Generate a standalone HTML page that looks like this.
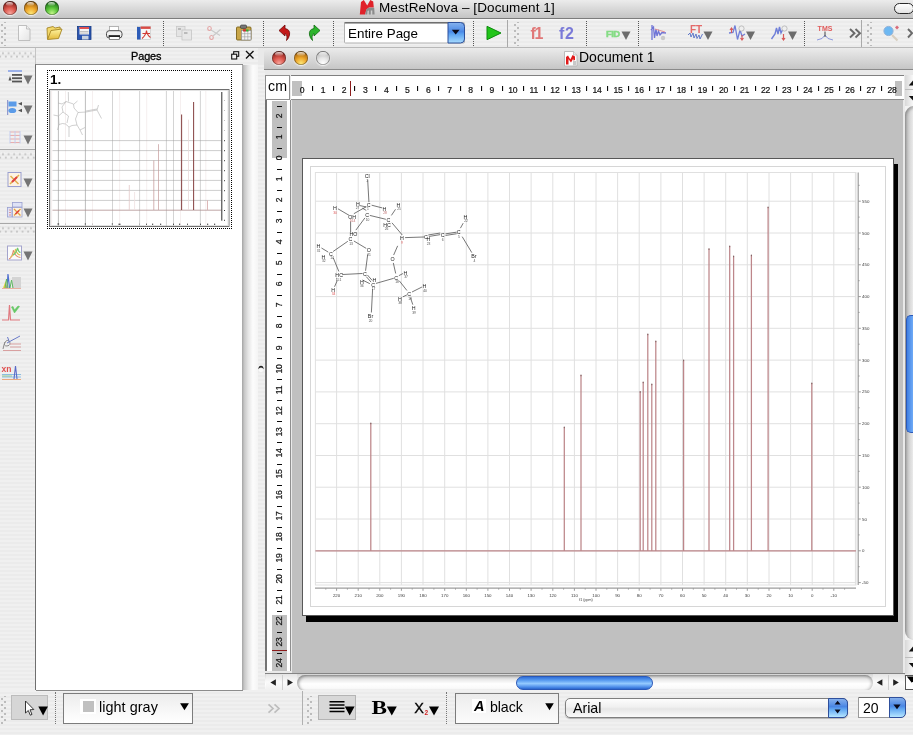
<!DOCTYPE html>
<html>
<head>
<meta charset="utf-8">
<title>MestReNova</title>
<style>
html,body{margin:0;padding:0;overflow:hidden;}
html{width:913px;height:735px;}
body{width:913px;height:735px;overflow:hidden;position:relative;background:#e9e9e9;font-family:"Liberation Sans",sans-serif;color:#000;}
.abs,body>div,body>svg{position:absolute;}
.stripes{background:repeating-linear-gradient(to bottom,#f0f0f0 0,#f0f0f0 2px,#ebebeb 2px,#ebebeb 4px);}
#titlebar{left:0;top:0;width:913px;height:18px;background:linear-gradient(#ececec,#e0e0e0 30%,#c4c4c4);border-bottom:1px solid #7c7c7c;}
.tl{position:absolute;border-radius:50%;box-shadow:0 0 0 0.8px rgba(30,30,30,.45) inset,0 1px 1.5px rgba(255,255,255,.85);}
.tl:after{content:"";position:absolute;left:24%;top:8%;width:52%;height:30%;border-radius:50%;background:linear-gradient(rgba(255,255,255,.8),rgba(255,255,255,.05));}
#title{left:379px;top:-1px;font-size:13.5px;line-height:18px;white-space:nowrap;letter-spacing:0.1px;}
#pill{left:893.5px;top:3px;width:19.5px;height:10.5px;border:1.5px solid #2a2a2a;border-radius:6px;background:linear-gradient(#fff,#e4e4e4);box-sizing:border-box;}
#toolbar{left:0;top:19px;width:913px;height:28px;border-bottom:1px solid #b9b9b9;}
.grip{position:absolute;width:7px;background-image:radial-gradient(circle,#bcbcbc 0.8px,transparent 1.3px),radial-gradient(circle,#bcbcbc 0.8px,transparent 1.3px);background-size:6px 6px;background-position:-1px 0,2px 3px;}
.vsep{position:absolute;width:0;border-left:1px dotted #555;}
#lefttb{left:0;top:48px;width:35px;height:642px;}
#pageshdr{left:36px;top:48px;width:222px;height:17px;font-size:10.9px;text-align:center;line-height:16px;-webkit-text-stroke:0.3px #000;text-indent:-1.5px;letter-spacing:-0.1px}
#pagespanel{left:35px;top:64px;width:207px;height:626px;background:#fff;border-left:1.5px solid #6f6f6f;border-top:1px solid #8d8d8d;}
#split{left:242px;top:65px;width:16px;height:625px;background:linear-gradient(to right,#a4a4a4 0,#c8c8c8 15%,#e6e6e6 40%,#fcfcfc 68%,#f4f4f4 100%);}
#docbar{left:264px;top:48px;width:649px;height:21px;background:linear-gradient(#ebebeb,#dcdcdc 40%,#c6c6c6);border-bottom:1px solid #8a8a8a;border-top-left-radius:5px;}
#doctitle{left:579px;top:48px;font-size:14px;line-height:19px;white-space:nowrap;}
#cmbox{left:265px;top:75px;width:23px;height:23px;background:#fff;border:1px solid #8f8f8f;font-size:14.2px;line-height:21px;text-align:center;}
#hruler{left:291px;top:75px;width:613px;height:23px;background:#fff;border-top:1.5px solid #7f7f7f;border-bottom:1px solid #8f8f8f;box-sizing:content-box;}
#vruler{left:265px;top:100px;width:23px;height:571px;background:#fff;border-left:2px solid #747474;border-right:1px solid #8f8f8f;}
.rl{position:absolute;width:20px;text-align:center;font-size:8.6px;line-height:10px;color:#111;-webkit-text-stroke:0.2px #111;letter-spacing:-0.2px;}
.rt{position:absolute;width:1px;height:5px;background:#0a0a0a;box-shadow:0.3px 0 0 rgba(0,0,0,.35);}
.rlv{position:absolute;width:20px;height:10px;text-align:center;font-size:8.6px;line-height:10px;color:#111;-webkit-text-stroke:0.2px #111;letter-spacing:-0.2px;transform:rotate(-90deg);transform-origin:50% 50%;}
.rtv{position:absolute;width:5px;height:1px;background:#0a0a0a;}
#canvas{left:292px;top:100px;width:611px;height:573px;background:#c0c0c0;overflow:hidden;}
#page{left:302px;top:158px;width:590px;height:455.5px;background:#fff;border:1px solid #585858;box-shadow:4px 6px 0 0 #000;box-sizing:content-box;}
#inner{left:310px;top:166px;width:574px;height:439px;border:1px solid #d6d6d6;box-sizing:content-box;}
svg .gr{stroke:#e0e0e0;stroke-width:1;}
svg .ax{font-family:"Liberation Sans",sans-serif;font-size:4.4px;fill:#3a3a3a;}
#hscroll{left:265px;top:673px;width:640px;height:17px;background:linear-gradient(#d4d4d4,#f4f4f4 35%,#ffffff 60%,#ededed);border-top:1px solid #848484;}
#vscroll{left:905px;top:75px;width:8px;height:598px;background:#f2f2f2;overflow:hidden;}
#bottombar{left:0;top:690px;width:913px;height:45px;}
.combo{position:absolute;box-sizing:border-box;border:1px solid #8a8a8a;background:#fff;font-size:14px;}
.tri{position:absolute;width:0;height:0;border-left:5px solid transparent;border-right:5px solid transparent;border-top:9px solid #111;}
.trig{position:absolute;width:0;height:0;border-left:6px solid transparent;border-right:6px solid transparent;border-top:10px solid #7a7a7a;}
.hgrip{position:absolute;width:35px;height:7px;background-image:radial-gradient(circle,#c2c2c2 0.8px,transparent 1.3px),radial-gradient(circle,#c2c2c2 0.8px,transparent 1.3px);background-size:5.6px 7px;background-position:0.2px -1.3px,-2.6px 2.2px;}

body>div,body>svg{will-change:transform;}

</style>
</head>
<body>
<div id="titlebar"></div>
<div class="tl" style="left:3.25px;top:1.25px;width:13.5px;height:13.5px;background:radial-gradient(circle at 50% 88%,#f6a59c 0,#de5a50 38%,#a0302a 68%,#3a0c0a 100%);"></div><div class="tl" style="left:24.25px;top:1.25px;width:13.5px;height:13.5px;background:radial-gradient(circle at 50% 88%,#fbe678 0,#eea82c 38%,#b87414 68%,#3a2406 100%);"></div><div class="tl" style="left:45.25px;top:1.25px;width:13.5px;height:13.5px;background:radial-gradient(circle at 50% 88%,#c2f48a 0,#5cc63a 38%,#2e8a22 68%,#0c2e08 100%);"></div>
<svg style="left:359px;top:0px" width="17" height="16" viewBox="359 0 17 16"><path d="M359.8 14.5 L361 2 L363.8 0 L367.2 5.5 L370.3 0 L373.2 1.5 L373.8 7.5 L369 7.5 L366.5 9.5 L365 14.5 Z" fill="#e0222a"/><path d="M365.2 14.5 L366.2 9.5 L368.5 7.8 L374.2 7.8 L374.6 14.5 L372.3 14.5 L372.3 10.5 L370.8 10.5 L370.8 14.5 L368.8 14.5 L368.8 10.5 L367.6 11 L367.3 14.5 Z" fill="#8c8c8c"/></svg>
<div id="title">MestReNova – [Document 1]</div>
<div id="pill"></div>
<div id="toolbar" class="stripes"></div>
<div style="left:0;top:19px;width:913px;height:1px;background:#f8f8f8"></div>
<div class="grip" style="left:0px;top:22px;height:24px;"></div>
<div class="vsep" style="left:163px;top:21px;height:25px;"></div>
<div class="vsep" style="left:263px;top:21px;height:25px;"></div>
<div class="vsep" style="left:333px;top:21px;height:25px;"></div>
<div class="vsep" style="left:473px;top:21px;height:25px;"></div>
<div style="left:507px;top:20px;width:1px;height:27px;background:#a9a9a9"></div>
<div class="grip" style="left:513px;top:22px;height:24px;"></div>
<div class="vsep" style="left:586px;top:21px;height:25px;"></div>
<div class="vsep" style="left:638px;top:21px;height:25px;"></div>
<div class="vsep" style="left:804px;top:21px;height:25px;"></div>
<div style="left:861px;top:20px;width:1px;height:27px;background:#a9a9a9"></div>
<div class="grip" style="left:866px;top:22px;height:24px;"></div>
<svg style="left:0;top:19px" width="913" height="29" viewBox="0 19 913 29">
<defs>
<linearGradient id="gpap" x1="0" y1="0" x2="1" y2="1"><stop offset="0" stop-color="#ffffff"/><stop offset="1" stop-color="#e4e4e4"/></linearGradient>
<linearGradient id="gfold" x1="0" y1="0" x2="0" y2="1"><stop offset="0" stop-color="#fff4a0"/><stop offset="1" stop-color="#e3b93a"/></linearGradient>
<linearGradient id="gblue" x1="0" y1="0" x2="0" y2="1"><stop offset="0" stop-color="#86b2ee"/><stop offset="0.45" stop-color="#4a88e6"/><stop offset="0.55" stop-color="#5aa0f0"/><stop offset="1" stop-color="#a8dcff"/></linearGradient>
</defs>
<!-- new -->
<path d="M18.5 25.5 L26.5 25.5 L30 29 L30 40.5 L18.5 40.5 Z" fill="url(#gpap)" stroke="#b9b9b9" stroke-width="0.9"/>
<path d="M26.5 25.5 L26.5 29 L30 29" fill="#eee" stroke="#b0b0b0" stroke-width="0.7"/>
<!-- open folder -->
<path d="M47.5 39 L47 28 L53 26.5 L55 28 L60 27 L60.5 30" fill="#f3d86a" stroke="#9a7a18" stroke-width="0.8"/>
<path d="M47.5 39.5 L51 30.5 L62 29 L58.5 38.5 Z" fill="url(#gfold)" stroke="#a58422" stroke-width="0.9"/>
<!-- save -->
<rect x="77.5" y="26.5" width="13.5" height="13" fill="#2a55b0" stroke="#173b86" stroke-width="0.8"/>
<rect x="79.5" y="27" width="9.5" height="7.5" fill="#f4f4f4"/>
<rect x="79.5" y="27" width="9.5" height="2" fill="#e05050"/>
<rect x="80" y="31" width="8.5" height="0.7" fill="#aaa"/><rect x="80" y="32.7" width="8.5" height="0.7" fill="#aaa"/>
<rect x="82" y="35.8" width="6.5" height="3.7" fill="#c8d2e0"/>
<!-- printer -->
<rect x="109.5" y="26.5" width="9" height="5.5" fill="#fff" stroke="#a4a4a4" stroke-width="0.8"/>
<rect x="106.5" y="30.7" width="15.5" height="7.3" rx="2.8" fill="#f1f1f1" stroke="#4a4a4a" stroke-width="1"/>
<rect x="109.3" y="35.6" width="10" height="4" fill="#fff" stroke="#555" stroke-width="0.7"/>
<rect x="108.6" y="35.3" width="11.4" height="1.7" fill="#222"/>
<!-- pdf -->
<rect x="137.5" y="26.5" width="13" height="13" fill="#f7f7f7" stroke="#c9c9c9" stroke-width="0.7"/>
<rect x="137" y="27" width="3.6" height="12.5" fill="#2d5cb8"/>
<rect x="140.6" y="26.5" width="10" height="2.4" fill="#d84a44"/>
<path d="M142 38.5 Q146 35 146.5 30.5 Q147 35 150.5 37.5 M142.5 33.5 L150 33.5" fill="none" stroke="#d23a34" stroke-width="1.1"/>
<!-- copy (disabled) -->
<g opacity="0.75"><rect x="176.5" y="26.5" width="8.5" height="10" fill="#e2e2e2" stroke="#bcbcbc" stroke-width="0.8"/>
<rect x="182" y="30" width="9.5" height="10" fill="#e6e6e6" stroke="#b8b8b8" stroke-width="0.8"/>
<rect x="178" y="28" width="3" height="2" fill="#aaa"/><rect x="184" y="32" width="3.5" height="2" fill="#aaa"/></g>
<!-- cut (disabled) -->
<g fill="none" stroke="#e3a3a3" stroke-width="1.1"><ellipse cx="209.5" cy="28.5" rx="1.8" ry="2"/><ellipse cx="211.5" cy="37.5" rx="1.8" ry="2"/></g>
<path d="M211 30 L220 35.5 M213 36 L220.5 29.5" stroke="#c9c9c9" stroke-width="1.1" fill="none"/>
<!-- paste -->
<rect x="236.5" y="27" width="14.5" height="13" rx="1" fill="#c9a648" stroke="#7c621a" stroke-width="0.9"/>
<rect x="240.5" y="25" width="6" height="3.4" rx="1" fill="#777" stroke="#333" stroke-width="0.6"/>
<rect x="241.5" y="30.5" width="9.5" height="9.5" fill="#f4f4f4" stroke="#8a8a8a" stroke-width="0.7"/>
<path d="M241.5 33.7 H251 M241.5 36.8 H251 M244.7 30.5 V40 M247.8 30.5 V40" stroke="#9a9a9a" stroke-width="0.6"/>
<rect x="243" y="29.2" width="3" height="2.3" fill="#c33"/><rect x="246" y="29.5" width="2.5" height="2" fill="#3a3"/>
<!-- undo -->
<path d="M279 30.5 L285 25 L285 28.5 Q290.5 29.5 289.5 35 Q289 38 286.5 40.5 Q288 35 285 33.5 L285 36 Z" fill="#c41818" stroke="#6e0808" stroke-width="0.8" stroke-linejoin="round"/>
<!-- redo -->
<path d="M320 30.5 L314 25 L314 28.5 Q308.5 29.5 309.5 35 Q310 38 312.5 40.5 Q311 35 314 33.5 L314 36 Z" fill="#2cb52c" stroke="#0d6a0d" stroke-width="0.8" stroke-linejoin="round"/>
<!-- combo entire page -->
<rect x="344.5" y="22.5" width="120" height="20.5" rx="1" fill="#fff" stroke="#b0b0b0" stroke-width="1"/>
<path d="M344.5 22.8 H448" stroke="#5a5a5a" stroke-width="1.3"/>
<path d="M448 22.5 H460.5 Q464.5 22.5 464.5 26.5 V39 Q464.5 43 460.5 43 H448 Z" fill="url(#gblue)" stroke="#2c4f9a" stroke-width="1"/>
<path d="M451.8 29.8 L459.6 29.8 L455.7 34.4 Z" fill="#0a0a1a"/>
<text x="348" y="38.3" font-family="Liberation Sans, sans-serif" font-size="13.4" fill="#000">Entire Page</text>
<!-- play -->
<path d="M487 26.3 L487 39.7 L501 33 Z" fill="#22c51a" stroke="#0c8a0c" stroke-width="1" stroke-linejoin="round"/>
<!-- f1 f2 -->
<text x="530.5" y="39" font-family="Liberation Sans, sans-serif" font-weight="bold" font-size="16" fill="#e07878" textLength="13">f1</text>
<text x="559" y="39" font-family="Liberation Sans, sans-serif" font-weight="bold" font-size="16" fill="#7a7ad8" textLength="15">f2</text>
<!-- FID -->
<text x="606" y="37" font-family="Liberation Sans, sans-serif" font-weight="bold" font-size="9.5" fill="#86dc86" stroke="#86dc86" stroke-width="0.5" textLength="14">FID</text>
<path d="M621.5 31.5 L630.5 31.5 L626 40 Z" fill="#6c6c6c"/>
<!-- fid plot -->
<path d="M652 25 L652 40 M651 30 L653.5 27 L654.5 38 L656 29 L657 36 L658.5 31 L660 35 L662 32.5 L666 33" fill="none" stroke="#6f74d6" stroke-width="1.3"/>
<path d="M655 29 L665 32" stroke="#e28a8a" stroke-width="0.9"/>
<circle cx="663" cy="38" r="2.2" fill="#c9c9c9"/>
<!-- FT -->
<text x="690" y="33" font-family="Liberation Sans, sans-serif" font-weight="bold" font-size="10" fill="#e46a6a" textLength="12">FT</text>
<path d="M688 35 L690 33 L691 37 L693 33 L694 38 L696 34 L697 38.5 L699 35 L700 39 L702.5 34" fill="none" stroke="#5f78c8" stroke-width="1"/>
<path d="M703.5 31.5 L712.5 31.5 L708 40 Z" fill="#6c6c6c"/>
<!-- phase -->
<path d="M729 33 L733 32.5 L735 25.5 L737.5 39.5 L740 30 L742 36 L745 34" fill="none" stroke="#6f7fd8" stroke-width="1.3"/>
<circle cx="741.5" cy="28.5" r="2.6" fill="#efefef" stroke="#aaa" stroke-width="0.7"/>
<path d="M731.5 28 V33 M730 30 L731.5 28 L733 30 M742 35 V40 M740.5 38 L742 40 L743.5 38" stroke="#d85a5a" stroke-width="1.1" fill="none"/>
<path d="M746 31.5 L755 31.5 L750.5 40 Z" fill="#6c6c6c"/>
<!-- baseline -->
<path d="M771.5 39 L775 34 L776.5 28 L778 34 L779.5 27 L781 33 L783 29 L786 28" fill="none" stroke="#6f7fd8" stroke-width="1.4"/>
<circle cx="784.5" cy="28.5" r="2.6" fill="#efefef" stroke="#aaa" stroke-width="0.7"/>
<path d="M783.5 34 V40 M782 38 L783.5 40 L785 38" stroke="#d85a5a" stroke-width="1.2" fill="none"/>
<path d="M788 31.5 L797 31.5 L792.5 40 Z" fill="#6c6c6c"/>
<!-- TMS -->
<text x="817.5" y="31" font-family="Liberation Sans, sans-serif" font-weight="bold" font-size="7" fill="#e05a5a" textLength="15">TMS</text>
<path d="M817 40 Q823 39.5 825 35 Q827 39.5 833 40" fill="none" stroke="#8a96de" stroke-width="1"/>
<path d="M825 31.5 V37" stroke="#444" stroke-width="1"/>
<!-- >> -->
<path d="M850 29 L854.5 33.2 L850 37.5 M855.5 29 L860 33.2 L855.5 37.5" fill="none" stroke="#6a6a6a" stroke-width="1.9"/>
<!-- zoom -->
<circle cx="888.5" cy="31" r="4.6" fill="#6db8f2" stroke="#8fb0d8" stroke-width="1"/>
<path d="M892 35 L897.5 40.5" stroke="#d8cfc0" stroke-width="2.2"/>
<path d="M895 27.5 L897 25.5 L899 27.5 L897 29.5 Z" fill="#d86a7a"/>
<path d="M908 29 L912 33.2 L908 37.5" fill="none" stroke="#6a6a6a" stroke-width="1.9"/>
</svg>
<div id="lefttb" class="stripes"></div>
<div style="left:34.5px;top:48px;width:1px;height:17px;background:#c4c4c4"></div>
<div class="hgrip" style="left:0px;top:51px;"></div>
<div class="hgrip" style="left:0px;top:152px;"></div>
<div style="left:0;top:148.5px;width:35px;height:1px;background:#a8a8a8"></div>
<div class="hgrip" style="left:0px;top:226px;"></div>
<div style="left:0;top:222.5px;width:35px;height:1px;background:#a8a8a8"></div>
<svg style="left:0;top:48px" width="36" height="642" viewBox="0 48 36 642">
<!-- 1 indent -->
<rect x="8" y="70" width="14" height="2" fill="#9bb0e8"/>
<rect x="12" y="74" width="10" height="1.8" fill="#555"/><rect x="12" y="77.3" width="10" height="1.8" fill="#555"/><rect x="12" y="80.6" width="10" height="1.8" fill="#555"/>
<path d="M8.5 80.5 L10 76 L11.5 80.5 Z" fill="#555"/>
<path d="M23.5 75.5 L32.5 75.5 L28 84.5 Z" fill="#747474"/>
<!-- 2 shapes -->
<rect x="7.2" y="100" width="1" height="15" fill="#7a86c8"/>
<rect x="8.5" y="101.5" width="8" height="5" fill="#5b9be8"/>
<ellipse cx="12.3" cy="110.5" rx="3.9" ry="2.6" fill="#5b9be8"/>
<path d="M18 103.7 L22 102 L22 105.4 Z M18 110.5 L22 108.8 L22 112.2 Z" fill="#555"/>
<path d="M23.5 105.5 L32.5 105.5 L28 114.5 Z" fill="#747474"/>
<!-- 3 table -->
<g opacity="0.8"><path d="M10 132 H20 M10 135.5 H20 M10 139 H20 M10 142.5 H20" stroke="#e8a0a0" stroke-width="1"/>
<path d="M10 131 V143.5 M15 131 V143.5 M20 131 V143.5" stroke="#b8c4ee" stroke-width="1"/></g>
<path d="M23.5 135.5 L32.5 135.5 L28 144.5 Z" fill="#747474"/>
<!-- 4 -->
<rect x="8" y="172.5" width="13" height="14" fill="#fdf3e3" stroke="#9aa0d0" stroke-width="1"/>
<path d="M10 184 L19 175 M10.5 176 L18.5 184" stroke="#e0b050" stroke-width="1.5"/>
<path d="M12 182 L17 177" stroke="#e04040" stroke-width="2"/>
<path d="M23.5 178.5 L32.5 178.5 L28 187.5 Z" fill="#747474"/>
<!-- 5 -->
<rect x="12.5" y="202.5" width="9.5" height="4.5" fill="#dfe3f6" stroke="#9aa0d0" stroke-width="0.8"/>
<rect x="7.5" y="207.5" width="4.5" height="9.5" fill="#dfe3f6" stroke="#9aa0d0" stroke-width="0.8"/>
<rect x="12.5" y="207.5" width="9.5" height="9.5" fill="#fdf3e3" stroke="#9aa0d0" stroke-width="0.8"/>
<path d="M14 215.5 L20.5 209 M14 209 L20.5 215.5" stroke="#e0a040" stroke-width="1.3"/>
<path d="M15.5 214 L19 210.5" stroke="#e04040" stroke-width="1.6"/>
<path d="M9 210 H11 M9 212.5 H11 M9 215 H11" stroke="#e08080" stroke-width="0.8"/>
<path d="M23.5 208.5 L32.5 208.5 L28 217.5 Z" fill="#747474"/>
<!-- 6 -->
<rect x="7.5" y="246" width="14" height="14" fill="#fbfbfb" stroke="#a4a4cc" stroke-width="1"/>
<path d="M9 259 Q12 258 13.5 250 Q15 257 20.5 257.5" fill="none" stroke="#e08a6a" stroke-width="1.1"/>
<path d="M10.5 257 Q14 256 15.5 249 Q17 255 20.5 255" fill="none" stroke="#e0c050" stroke-width="1.1"/>
<path d="M13 255 Q16 254 17.5 248 Q18.5 252 20.5 252.5" fill="none" stroke="#70c870" stroke-width="1.1"/>
<path d="M23.5 251.5 L32.5 251.5 L28 260.5 Z" fill="#747474"/>
<!-- 7 -->
<rect x="12" y="277" width="9" height="11" fill="#d4d4d4"/>
<path d="M2 288.5 H21" stroke="#e8b0a0" stroke-width="1"/>
<path d="M3 288 L5.5 281 L7.5 288 Z" fill="#e8d040"/>
<path d="M7 288 L8 274 L9.5 288" fill="none" stroke="#5070d0" stroke-width="1.2"/>
<path d="M5 288 L6.5 279 L8 288 M10 288 L11.5 280 L13 288" fill="none" stroke="#60b860" stroke-width="1"/>
<!-- 8 -->
<path d="M2 320 H8.5 L9.5 305 L10.5 320 H20" fill="none" stroke="#e07a80" stroke-width="1.2"/>
<path d="M11.5 307 L14.5 313 L19.5 306.5 L18 306 L14.5 310 L13 306.5 Z" fill="#66c866" stroke="#66c866" stroke-width="0.6"/>
<!-- 9 -->
<path d="M3 349 Q5 338 9 341 Q12 345 7 346 Q3 346 5 342" fill="none" stroke="#8a8a8a" stroke-width="1"/>
<path d="M3 350.5 H21 M10 347 H21 M10 344 H21" stroke="#d8a0a0" stroke-width="1"/>
<path d="M7 343 L20 336 M7.5 337 L9 341" stroke="#6a7ac8" stroke-width="1"/>
<!-- 10 -->
<text x="1.5" y="372" font-family="Liberation Sans, sans-serif" font-weight="bold" font-size="8.5" fill="#e05050">xn</text>
<path d="M2 374.5 H21 M2 377 H21" stroke="#80b8e0" stroke-width="0.9"/>
<path d="M2 379.5 H21" stroke="#e8a070" stroke-width="0.9"/>
<path d="M14 379 L15.5 366 L17 379" fill="none" stroke="#5a6ac8" stroke-width="1.1"/>
<path d="M2 376 H12" stroke="#80c080" stroke-width="0.8"/>
</svg>
<div id="pageshdr" class="stripes">Pages</div>
<svg style="left:230px;top:49px" width="28" height="14" viewBox="230 49 28 14">
<rect x="233.7" y="51.7" width="5" height="4.6" fill="#f4f4f4" stroke="#111" stroke-width="1.1"/>
<rect x="231.7" y="54.2" width="5" height="4.8" fill="#f4f4f4" stroke="#111" stroke-width="1.1"/>
<path d="M246 51 L253.5 58.5 M253.5 51 L246 58.5" stroke="#111" stroke-width="1.4"/>
</svg>
<div id="pagespanel"></div>
<div id="split"></div>
<div class="stripes" style="left:258px;top:65px;width:7px;height:625px;"></div>
<div style="left:258px;top:364px;width:6px;height:10px;margin-top:-4px"><svg width="6" height="10" viewBox="0 0 6 10"><path d="M0.3 5.2 Q0.6 1.8 3 1.8 Q5.4 1.8 5.7 5.2 Q4.6 3.6 3 3.6 Q1.4 3.6 0.3 5.2 Z" fill="#222"/><circle cx="3" cy="6.2" r="2" fill="#fafafa"/></svg></div>
<div style="left:47px;top:70px;width:182.5px;height:157px;border:1px dotted #000;box-sizing:content-box;"></div>
<div style="left:50px;top:72px;font-size:13.5px;font-weight:bold;line-height:15px;">1.</div>
<svg style="left:36px;top:65px" width="207" height="170" viewBox="36 65 207 170">
<rect x="49.5" y="89.5" width="179.5" height="137" fill="#fff" stroke="#6e6e6e" stroke-width="1"/>
<rect x="50.5" y="90.5" width="177.5" height="135" fill="none" stroke="#e2e2e2" stroke-width="1"/>
<g stroke="#8e8e8e" stroke-width="0.6">
<path d="M58.4 91 V226 M85.4 91 V226"/>
</g>
<g stroke="#b0b0b0" stroke-width="0.55">
<path d="M112.5 91 V226 M139.6 91 V226 M166.4 91 V226 M173.5 91 V226 M200.4 91 V226"/>
</g>
<g stroke="#eadede" stroke-width="0.5">
<path d="M51.6 91 V226 M146.7 91 V226 M205.8 91 V226 M119.6 91 V226 M92.5 91 V226 M65.5 91 V226 M180.5 91 V226"/>
</g>
<g stroke="#9c9c9c" stroke-width="0.5">
<path d="M52.5 140.6 H221.5 M52.5 150.6 H221.5 M52.5 160.5 H221.5 M52.5 170.4 H221.5 M52.5 180.4 H221.5 M52.5 190.4 H221.5 M52.5 200.4 H221.5"/>
</g>
<path d="M52.5 210.2 H221.5" stroke="#b09090" stroke-width="0.8"/>
<!-- peaks -->
<path d="M129.3 210 V185" stroke="#e2c8c8" stroke-width="0.8"/>
<path d="M134.6 210 V192" stroke="#eedede" stroke-width="0.8"/>
<path d="M153.8 210 V160.5" stroke="#c09090" stroke-width="0.7"/>
<path d="M158.5 210 V144.2" stroke="#c49a9a" stroke-width="0.7"/>
<path d="M181.6 210 V114.6" stroke="#8a4848" stroke-width="1.05"/>
<path d="M188.5 210 V119.7" stroke="#ead8d8" stroke-width="0.8"/>
<path d="M193.6 210 V101.9" stroke="#8a4848" stroke-width="1.05"/>
<path d="M207.5 210 V200.3" stroke="#d8b0b0" stroke-width="0.9"/>
<path d="M221.8 92 V220.7" stroke="#2e2e2e" stroke-width="1"/>
<g fill="#333">
<rect x="224" y="140.2" width="1" height="1"/><rect x="224" y="150.2" width="1" height="1"/><rect x="224" y="160.2" width="1" height="1"/><rect x="224" y="170.2" width="1" height="1"/><rect x="224" y="180.2" width="1" height="1"/><rect x="224" y="190.2" width="1" height="1"/><rect x="224" y="200.2" width="1" height="1"/><rect x="224" y="210" width="1" height="1"/><rect x="224" y="219.8" width="1" height="1"/>
<rect x="224" y="100" width="0.8" height="0.8" opacity=".5"/><rect x="224" y="110" width="0.8" height="0.8" opacity=".5"/><rect x="224" y="120" width="0.8" height="0.8" opacity=".5"/><rect x="224" y="130" width="0.8" height="0.8" opacity=".5"/>
</g>
<g fill="#222">
<rect x="57.5" y="223.5" width="1.6" height="1"/><rect x="84.8" y="223.5" width="1" height="1"/><rect x="111.8" y="223.5" width="1" height="1"/><rect x="118.5" y="223.7" width="2" height="1"/><rect x="146" y="223.7" width="1" height="1"/><rect x="152" y="223.7" width="1.2" height="1"/><rect x="160" y="223.7" width="1.2" height="1"/><rect x="173" y="223.7" width="1" height="1"/><rect x="179" y="223.7" width="1.2" height="1"/><rect x="187" y="223.7" width="1" height="1"/><rect x="200" y="223.7" width="1" height="1"/><rect x="207" y="223.7" width="1.2" height="1"/><rect x="214" y="223.7" width="1.2" height="1"/><rect x="92" y="223.7" width="0.8" height="0.8" opacity=".5"/><rect x="65" y="223.7" width="0.8" height="0.8" opacity=".5"/><rect x="139" y="223.7" width="0.8" height="0.8" opacity=".5"/>
</g>
<!-- mini molecule -->
<g fill="none" stroke="#b0b0b0" stroke-width="0.6">
<path d="M62 104 L66 101.5 L69 102.5 L73.5 104 L74 108 L78 112.5 L75.5 119 L77 125 L72 125.5 L69 127 L65.5 124 L62.5 123.5 L59 124.5 L58.5 116 L63 112 L62 107 L66 101.5"/>
<path d="M63 112 L68.5 116 L67 123 M68.3 92 L68.5 101.5 M78 112.5 L86 112 L97 110 L101.5 118.5 M97 110 L98.5 105 M86 111 L97 109 M69 127 L69 137 M77 125 L80 130 L85 127.5 M80 130 L82.5 135 M58.5 116 L53.5 115 M59 124.5 L57.5 130 M74 104 L77.5 101 M62 104 L58 103"/>
</g>
</svg>

<div id="docbar"></div>
<div class="tl" style="left:272.0px;top:51.0px;width:14.0px;height:14.0px;background:radial-gradient(circle at 50% 88%,#f6a59c 0,#de5a50 38%,#a0302a 68%,#3a0c0a 100%);"></div><div class="tl" style="left:294.0px;top:51.0px;width:14.0px;height:14.0px;background:radial-gradient(circle at 50% 88%,#fbe678 0,#eea82c 38%,#b87414 68%,#3a2406 100%);"></div><div class="tl" style="left:316.3px;top:51.0px;width:14.0px;height:14.0px;background:radial-gradient(circle at 50% 88%,#ffffff 0,#e6e6e6 38%,#c4c4c4 68%,#8a8a8a 100%);"></div>
<svg style="left:564px;top:50px" width="14" height="17" viewBox="0 0 14 17"><path d="M0.5 1.5 H9.5 L13 5 V16 H0.5 Z" fill="#fdfdfd" stroke="#b4b4b4" stroke-width="0.9"/><path d="M9.5 1.5 V5 H13" fill="#e8e8e8" stroke="#b4b4b4" stroke-width="0.7"/><path d="M2 14.5 V7 L4 5.5 L6.3 9.5 L8.6 5 L11 6.5 V10 L9.3 10.5 L9.3 8.5 L7 12.5 L4.5 9 V14.5 Z" fill="#e01a1a"/><rect x="9" y="11" width="3" height="4.5" fill="#c8c8c8"/></svg>
<div id="doctitle">Document 1</div>
<div id="cmbox">cm</div>
<div id="hruler"></div>
<div id="vruler"></div>
<div style="left:292px;top:81px;width:10px;height:15px;background:#c0c0c0"></div>
<div style="left:895px;top:81px;width:7px;height:15px;background:#c0c0c0"></div>
<div style="left:272px;top:101px;width:15px;height:57px;background:#c0c0c0"></div>
<div style="left:272px;top:615px;width:15px;height:56px;background:#c0c0c0"></div>
<div style="left:0;top:0;width:913px;height:735px;"><div class="rl" style="left:292.0px;top:84.5px;">0</div><div class="rt" style="left:312px;top:86px;"></div><div class="rl" style="left:313.1px;top:84.5px;">1</div><div class="rt" style="left:333px;top:86px;"></div><div class="rl" style="left:334.1px;top:84.5px;">2</div><div class="rt" style="left:354px;top:86px;"></div><div class="rl" style="left:355.2px;top:84.5px;">3</div><div class="rt" style="left:375px;top:86px;"></div><div class="rl" style="left:376.3px;top:84.5px;">4</div><div class="rt" style="left:396px;top:86px;"></div><div class="rl" style="left:397.4px;top:84.5px;">5</div><div class="rt" style="left:417px;top:86px;"></div><div class="rl" style="left:418.4px;top:84.5px;">6</div><div class="rt" style="left:438px;top:86px;"></div><div class="rl" style="left:439.5px;top:84.5px;">7</div><div class="rt" style="left:460px;top:86px;"></div><div class="rl" style="left:460.6px;top:84.5px;">8</div><div class="rt" style="left:481px;top:86px;"></div><div class="rl" style="left:481.7px;top:84.5px;">9</div><div class="rt" style="left:502px;top:86px;"></div><div class="rl" style="left:502.8px;top:84.5px;">10</div><div class="rt" style="left:523px;top:86px;"></div><div class="rl" style="left:523.8px;top:84.5px;">11</div><div class="rt" style="left:544px;top:86px;"></div><div class="rl" style="left:544.9px;top:84.5px;">12</div><div class="rt" style="left:565px;top:86px;"></div><div class="rl" style="left:566.0px;top:84.5px;">13</div><div class="rt" style="left:586px;top:86px;"></div><div class="rl" style="left:587.0px;top:84.5px;">14</div><div class="rt" style="left:607px;top:86px;"></div><div class="rl" style="left:608.1px;top:84.5px;">15</div><div class="rt" style="left:628px;top:86px;"></div><div class="rl" style="left:629.2px;top:84.5px;">16</div><div class="rt" style="left:649px;top:86px;"></div><div class="rl" style="left:650.3px;top:84.5px;">17</div><div class="rt" style="left:670px;top:86px;"></div><div class="rl" style="left:671.3px;top:84.5px;">18</div><div class="rt" style="left:691px;top:86px;"></div><div class="rl" style="left:692.4px;top:84.5px;">19</div><div class="rt" style="left:712px;top:86px;"></div><div class="rl" style="left:713.5px;top:84.5px;">20</div><div class="rt" style="left:734px;top:86px;"></div><div class="rl" style="left:734.6px;top:84.5px;">21</div><div class="rt" style="left:755px;top:86px;"></div><div class="rl" style="left:755.6px;top:84.5px;">22</div><div class="rt" style="left:776px;top:86px;"></div><div class="rl" style="left:776.7px;top:84.5px;">23</div><div class="rt" style="left:797px;top:86px;"></div><div class="rl" style="left:797.8px;top:84.5px;">24</div><div class="rt" style="left:818px;top:86px;"></div><div class="rl" style="left:818.9px;top:84.5px;">25</div><div class="rt" style="left:839px;top:86px;"></div><div class="rl" style="left:839.9px;top:84.5px;">26</div><div class="rt" style="left:860px;top:86px;"></div><div class="rl" style="left:861.0px;top:84.5px;">27</div><div class="rt" style="left:881px;top:86px;"></div><div class="rl" style="left:882.1px;top:84.5px;">28</div><div class="rlv" style="left:269px;top:110.9px;">2</div><div class="rtv" style="left:277px;top:106px;"></div><div class="rlv" style="left:269px;top:131.9px;">1</div><div class="rtv" style="left:277px;top:127px;"></div><div class="rlv" style="left:269px;top:153.0px;">0</div><div class="rtv" style="left:277px;top:148px;"></div><div class="rlv" style="left:269px;top:174.1px;">1</div><div class="rtv" style="left:277px;top:169px;"></div><div class="rlv" style="left:269px;top:195.1px;">2</div><div class="rtv" style="left:277px;top:190px;"></div><div class="rlv" style="left:269px;top:216.2px;">3</div><div class="rtv" style="left:277px;top:211px;"></div><div class="rlv" style="left:269px;top:237.2px;">4</div><div class="rtv" style="left:277px;top:232px;"></div><div class="rlv" style="left:269px;top:258.2px;">5</div><div class="rtv" style="left:277px;top:253px;"></div><div class="rlv" style="left:269px;top:279.3px;">6</div><div class="rtv" style="left:277px;top:274px;"></div><div class="rlv" style="left:269px;top:300.4px;">7</div><div class="rtv" style="left:277px;top:295px;"></div><div class="rlv" style="left:269px;top:321.4px;">8</div><div class="rtv" style="left:277px;top:316px;"></div><div class="rlv" style="left:269px;top:342.5px;">9</div><div class="rtv" style="left:277px;top:337px;"></div><div class="rlv" style="left:269px;top:363.5px;">10</div><div class="rtv" style="left:277px;top:358px;"></div><div class="rlv" style="left:269px;top:384.6px;">11</div><div class="rtv" style="left:277px;top:379px;"></div><div class="rlv" style="left:269px;top:405.6px;">12</div><div class="rtv" style="left:277px;top:400px;"></div><div class="rlv" style="left:269px;top:426.7px;">13</div><div class="rtv" style="left:277px;top:421px;"></div><div class="rlv" style="left:269px;top:447.7px;">14</div><div class="rtv" style="left:277px;top:442px;"></div><div class="rlv" style="left:269px;top:468.8px;">15</div><div class="rtv" style="left:277px;top:464px;"></div><div class="rlv" style="left:269px;top:489.8px;">16</div><div class="rtv" style="left:277px;top:485px;"></div><div class="rlv" style="left:269px;top:510.9px;">17</div><div class="rtv" style="left:277px;top:506px;"></div><div class="rlv" style="left:269px;top:531.9px;">18</div><div class="rtv" style="left:277px;top:527px;"></div><div class="rlv" style="left:269px;top:553.0px;">19</div><div class="rtv" style="left:277px;top:548px;"></div><div class="rlv" style="left:269px;top:574.0px;">20</div><div class="rtv" style="left:277px;top:569px;"></div><div class="rlv" style="left:269px;top:595.0px;">21</div><div class="rtv" style="left:277px;top:590px;"></div><div class="rlv" style="left:269px;top:616.1px;">22</div><div class="rtv" style="left:277px;top:611px;"></div><div class="rlv" style="left:269px;top:637.2px;">23</div><div class="rtv" style="left:277px;top:632px;"></div><div class="rlv" style="left:269px;top:658.2px;">24</div><div class="rtv" style="left:277px;top:653px;"></div></div>
<div style="left:350px;top:81px;width:1px;height:15px;background:#8c1c1c"></div>
<div style="left:272px;top:650px;width:15px;height:1px;background:#8c1c1c"></div>
<div id="canvas"></div>
<div id="page"></div>
<div id="inner"></div>
<svg style="left:0;top:0" width="913" height="735" viewBox="0 0 913 735"><line x1="336.6" y1="172.5" x2="336.6" y2="585" class="gr"/><line x1="358.2" y1="172.5" x2="358.2" y2="585" class="gr"/><line x1="379.8" y1="172.5" x2="379.8" y2="585" class="gr"/><line x1="401.4" y1="172.5" x2="401.4" y2="585" class="gr"/><line x1="423.0" y1="172.5" x2="423.0" y2="585" class="gr"/><line x1="444.7" y1="172.5" x2="444.7" y2="585" class="gr"/><line x1="466.3" y1="172.5" x2="466.3" y2="585" class="gr"/><line x1="487.9" y1="172.5" x2="487.9" y2="585" class="gr"/><line x1="509.5" y1="172.5" x2="509.5" y2="585" class="gr"/><line x1="531.1" y1="172.5" x2="531.1" y2="585" class="gr"/><line x1="552.8" y1="172.5" x2="552.8" y2="585" class="gr"/><line x1="574.4" y1="172.5" x2="574.4" y2="585" class="gr"/><line x1="596.0" y1="172.5" x2="596.0" y2="585" class="gr"/><line x1="617.6" y1="172.5" x2="617.6" y2="585" class="gr"/><line x1="639.2" y1="172.5" x2="639.2" y2="585" class="gr"/><line x1="660.9" y1="172.5" x2="660.9" y2="585" class="gr"/><line x1="682.5" y1="172.5" x2="682.5" y2="585" class="gr"/><line x1="704.1" y1="172.5" x2="704.1" y2="585" class="gr"/><line x1="725.7" y1="172.5" x2="725.7" y2="585" class="gr"/><line x1="747.3" y1="172.5" x2="747.3" y2="585" class="gr"/><line x1="769.0" y1="172.5" x2="769.0" y2="585" class="gr"/><line x1="790.6" y1="172.5" x2="790.6" y2="585" class="gr"/><line x1="812.2" y1="172.5" x2="812.2" y2="585" class="gr"/><line x1="833.8" y1="172.5" x2="833.8" y2="585" class="gr"/><line x1="855.4" y1="172.5" x2="855.4" y2="585" class="gr"/><line x1="315.4" y1="582.6" x2="856" y2="582.6" class="gr"/><line x1="315.4" y1="550.8" x2="856" y2="550.8" class="gr"/><line x1="315.4" y1="519.0" x2="856" y2="519.0" class="gr"/><line x1="315.4" y1="487.2" x2="856" y2="487.2" class="gr"/><line x1="315.4" y1="455.5" x2="856" y2="455.5" class="gr"/><line x1="315.4" y1="423.7" x2="856" y2="423.7" class="gr"/><line x1="315.4" y1="391.9" x2="856" y2="391.9" class="gr"/><line x1="315.4" y1="360.1" x2="856" y2="360.1" class="gr"/><line x1="315.4" y1="328.3" x2="856" y2="328.3" class="gr"/><line x1="315.4" y1="296.6" x2="856" y2="296.6" class="gr"/><line x1="315.4" y1="264.8" x2="856" y2="264.8" class="gr"/><line x1="315.4" y1="233.0" x2="856" y2="233.0" class="gr"/><line x1="315.4" y1="201.2" x2="856" y2="201.2" class="gr"/><rect x="315.4" y="172.5" width="540.6" height="412.5" fill="none" class="gr"/><line x1="315" y1="588.2" x2="856" y2="588.2" stroke="#9c9c9c" stroke-width="1.2"/><line x1="858.2" y1="172.5" x2="858.2" y2="585" stroke="#9c9c9c" stroke-width="1.2"/><line x1="325.8" y1="588.6" x2="325.8" y2="589.6" stroke="#555" stroke-width="0.6"/><line x1="336.6" y1="588.6" x2="336.6" y2="590.8000000000001" stroke="#555" stroke-width="0.6"/><text x="336.6" y="597.3" class="ax" text-anchor="middle">220</text><line x1="347.4" y1="588.6" x2="347.4" y2="589.6" stroke="#555" stroke-width="0.6"/><line x1="358.2" y1="588.6" x2="358.2" y2="590.8000000000001" stroke="#555" stroke-width="0.6"/><text x="358.2" y="597.3" class="ax" text-anchor="middle">210</text><line x1="369.0" y1="588.6" x2="369.0" y2="589.6" stroke="#555" stroke-width="0.6"/><line x1="379.8" y1="588.6" x2="379.8" y2="590.8000000000001" stroke="#555" stroke-width="0.6"/><text x="379.8" y="597.3" class="ax" text-anchor="middle">200</text><line x1="390.6" y1="588.6" x2="390.6" y2="589.6" stroke="#555" stroke-width="0.6"/><line x1="401.4" y1="588.6" x2="401.4" y2="590.8000000000001" stroke="#555" stroke-width="0.6"/><text x="401.4" y="597.3" class="ax" text-anchor="middle">190</text><line x1="412.2" y1="588.6" x2="412.2" y2="589.6" stroke="#555" stroke-width="0.6"/><line x1="423.0" y1="588.6" x2="423.0" y2="590.8000000000001" stroke="#555" stroke-width="0.6"/><text x="423.0" y="597.3" class="ax" text-anchor="middle">180</text><line x1="433.9" y1="588.6" x2="433.9" y2="589.6" stroke="#555" stroke-width="0.6"/><line x1="444.7" y1="588.6" x2="444.7" y2="590.8000000000001" stroke="#555" stroke-width="0.6"/><text x="444.7" y="597.3" class="ax" text-anchor="middle">170</text><line x1="455.5" y1="588.6" x2="455.5" y2="589.6" stroke="#555" stroke-width="0.6"/><line x1="466.3" y1="588.6" x2="466.3" y2="590.8000000000001" stroke="#555" stroke-width="0.6"/><text x="466.3" y="597.3" class="ax" text-anchor="middle">160</text><line x1="477.1" y1="588.6" x2="477.1" y2="589.6" stroke="#555" stroke-width="0.6"/><line x1="487.9" y1="588.6" x2="487.9" y2="590.8000000000001" stroke="#555" stroke-width="0.6"/><text x="487.9" y="597.3" class="ax" text-anchor="middle">150</text><line x1="498.7" y1="588.6" x2="498.7" y2="589.6" stroke="#555" stroke-width="0.6"/><line x1="509.5" y1="588.6" x2="509.5" y2="590.8000000000001" stroke="#555" stroke-width="0.6"/><text x="509.5" y="597.3" class="ax" text-anchor="middle">140</text><line x1="520.3" y1="588.6" x2="520.3" y2="589.6" stroke="#555" stroke-width="0.6"/><line x1="531.1" y1="588.6" x2="531.1" y2="590.8000000000001" stroke="#555" stroke-width="0.6"/><text x="531.1" y="597.3" class="ax" text-anchor="middle">130</text><line x1="542.0" y1="588.6" x2="542.0" y2="589.6" stroke="#555" stroke-width="0.6"/><line x1="552.8" y1="588.6" x2="552.8" y2="590.8000000000001" stroke="#555" stroke-width="0.6"/><text x="552.8" y="597.3" class="ax" text-anchor="middle">120</text><line x1="563.6" y1="588.6" x2="563.6" y2="589.6" stroke="#555" stroke-width="0.6"/><line x1="574.4" y1="588.6" x2="574.4" y2="590.8000000000001" stroke="#555" stroke-width="0.6"/><text x="574.4" y="597.3" class="ax" text-anchor="middle">110</text><line x1="585.2" y1="588.6" x2="585.2" y2="589.6" stroke="#555" stroke-width="0.6"/><line x1="596.0" y1="588.6" x2="596.0" y2="590.8000000000001" stroke="#555" stroke-width="0.6"/><text x="596.0" y="597.3" class="ax" text-anchor="middle">100</text><line x1="606.8" y1="588.6" x2="606.8" y2="589.6" stroke="#555" stroke-width="0.6"/><line x1="617.6" y1="588.6" x2="617.6" y2="590.8000000000001" stroke="#555" stroke-width="0.6"/><text x="617.6" y="597.3" class="ax" text-anchor="middle">90</text><line x1="628.4" y1="588.6" x2="628.4" y2="589.6" stroke="#555" stroke-width="0.6"/><line x1="639.2" y1="588.6" x2="639.2" y2="590.8000000000001" stroke="#555" stroke-width="0.6"/><text x="639.2" y="597.3" class="ax" text-anchor="middle">80</text><line x1="650.1" y1="588.6" x2="650.1" y2="589.6" stroke="#555" stroke-width="0.6"/><line x1="660.9" y1="588.6" x2="660.9" y2="590.8000000000001" stroke="#555" stroke-width="0.6"/><text x="660.9" y="597.3" class="ax" text-anchor="middle">70</text><line x1="671.7" y1="588.6" x2="671.7" y2="589.6" stroke="#555" stroke-width="0.6"/><line x1="682.5" y1="588.6" x2="682.5" y2="590.8000000000001" stroke="#555" stroke-width="0.6"/><text x="682.5" y="597.3" class="ax" text-anchor="middle">60</text><line x1="693.3" y1="588.6" x2="693.3" y2="589.6" stroke="#555" stroke-width="0.6"/><line x1="704.1" y1="588.6" x2="704.1" y2="590.8000000000001" stroke="#555" stroke-width="0.6"/><text x="704.1" y="597.3" class="ax" text-anchor="middle">50</text><line x1="714.9" y1="588.6" x2="714.9" y2="589.6" stroke="#555" stroke-width="0.6"/><line x1="725.7" y1="588.6" x2="725.7" y2="590.8000000000001" stroke="#555" stroke-width="0.6"/><text x="725.7" y="597.3" class="ax" text-anchor="middle">40</text><line x1="736.5" y1="588.6" x2="736.5" y2="589.6" stroke="#555" stroke-width="0.6"/><line x1="747.3" y1="588.6" x2="747.3" y2="590.8000000000001" stroke="#555" stroke-width="0.6"/><text x="747.3" y="597.3" class="ax" text-anchor="middle">30</text><line x1="758.2" y1="588.6" x2="758.2" y2="589.6" stroke="#555" stroke-width="0.6"/><line x1="769.0" y1="588.6" x2="769.0" y2="590.8000000000001" stroke="#555" stroke-width="0.6"/><text x="769.0" y="597.3" class="ax" text-anchor="middle">20</text><line x1="779.8" y1="588.6" x2="779.8" y2="589.6" stroke="#555" stroke-width="0.6"/><line x1="790.6" y1="588.6" x2="790.6" y2="590.8000000000001" stroke="#555" stroke-width="0.6"/><text x="790.6" y="597.3" class="ax" text-anchor="middle">10</text><line x1="801.4" y1="588.6" x2="801.4" y2="589.6" stroke="#555" stroke-width="0.6"/><line x1="812.2" y1="588.6" x2="812.2" y2="590.8000000000001" stroke="#555" stroke-width="0.6"/><text x="812.2" y="597.3" class="ax" text-anchor="middle">0</text><line x1="823.0" y1="588.6" x2="823.0" y2="589.6" stroke="#555" stroke-width="0.6"/><line x1="833.8" y1="588.6" x2="833.8" y2="590.8000000000001" stroke="#555" stroke-width="0.6"/><text x="833.8" y="597.3" class="ax" text-anchor="middle">-10</text><line x1="844.6" y1="588.6" x2="844.6" y2="589.6" stroke="#555" stroke-width="0.6"/><line x1="858.6" y1="582.6" x2="860.8000000000001" y2="582.6" stroke="#555" stroke-width="0.6"/><text x="862" y="584.1" class="ax">-50</text><line x1="858.6" y1="566.7" x2="859.6" y2="566.7" stroke="#555" stroke-width="0.6"/><line x1="858.6" y1="550.8" x2="860.8000000000001" y2="550.8" stroke="#555" stroke-width="0.6"/><text x="862" y="552.3" class="ax">0</text><line x1="858.6" y1="534.9" x2="859.6" y2="534.9" stroke="#555" stroke-width="0.6"/><line x1="858.6" y1="519.0" x2="860.8000000000001" y2="519.0" stroke="#555" stroke-width="0.6"/><text x="862" y="520.5" class="ax">50</text><line x1="858.6" y1="503.1" x2="859.6" y2="503.1" stroke="#555" stroke-width="0.6"/><line x1="858.6" y1="487.2" x2="860.8000000000001" y2="487.2" stroke="#555" stroke-width="0.6"/><text x="862" y="488.7" class="ax">100</text><line x1="858.6" y1="471.3" x2="859.6" y2="471.3" stroke="#555" stroke-width="0.6"/><line x1="858.6" y1="455.5" x2="860.8000000000001" y2="455.5" stroke="#555" stroke-width="0.6"/><text x="862" y="457.0" class="ax">150</text><line x1="858.6" y1="439.6" x2="859.6" y2="439.6" stroke="#555" stroke-width="0.6"/><line x1="858.6" y1="423.7" x2="860.8000000000001" y2="423.7" stroke="#555" stroke-width="0.6"/><text x="862" y="425.2" class="ax">200</text><line x1="858.6" y1="407.8" x2="859.6" y2="407.8" stroke="#555" stroke-width="0.6"/><line x1="858.6" y1="391.9" x2="860.8000000000001" y2="391.9" stroke="#555" stroke-width="0.6"/><text x="862" y="393.4" class="ax">250</text><line x1="858.6" y1="376.0" x2="859.6" y2="376.0" stroke="#555" stroke-width="0.6"/><line x1="858.6" y1="360.1" x2="860.8000000000001" y2="360.1" stroke="#555" stroke-width="0.6"/><text x="862" y="361.6" class="ax">300</text><line x1="858.6" y1="344.2" x2="859.6" y2="344.2" stroke="#555" stroke-width="0.6"/><line x1="858.6" y1="328.3" x2="860.8000000000001" y2="328.3" stroke="#555" stroke-width="0.6"/><text x="862" y="329.8" class="ax">350</text><line x1="858.6" y1="312.4" x2="859.6" y2="312.4" stroke="#555" stroke-width="0.6"/><line x1="858.6" y1="296.6" x2="860.8000000000001" y2="296.6" stroke="#555" stroke-width="0.6"/><text x="862" y="298.1" class="ax">400</text><line x1="858.6" y1="280.7" x2="859.6" y2="280.7" stroke="#555" stroke-width="0.6"/><line x1="858.6" y1="264.8" x2="860.8000000000001" y2="264.8" stroke="#555" stroke-width="0.6"/><text x="862" y="266.3" class="ax">450</text><line x1="858.6" y1="248.9" x2="859.6" y2="248.9" stroke="#555" stroke-width="0.6"/><line x1="858.6" y1="233.0" x2="860.8000000000001" y2="233.0" stroke="#555" stroke-width="0.6"/><text x="862" y="234.5" class="ax">500</text><line x1="858.6" y1="217.1" x2="859.6" y2="217.1" stroke="#555" stroke-width="0.6"/><line x1="858.6" y1="201.2" x2="860.8000000000001" y2="201.2" stroke="#555" stroke-width="0.6"/><text x="862" y="202.7" class="ax">550</text><line x1="858.6" y1="185.3" x2="859.6" y2="185.3" stroke="#555" stroke-width="0.6"/><text x="586" y="601.3" class="ax" text-anchor="middle" style="font-size:3.6px">f1 (ppm)</text><path d="M315.4 550.8 L856 550.8 M370.8 551.2 L370.8 423 M564.3 551.2 L564.3 427 M581.0 551.2 L581.0 375 M640.2 551.2 L640.2 391.5 M643.2 551.2 L643.2 382 M647.8 551.2 L647.8 334 M651.8 551.2 L651.8 384 M655.8 551.2 L655.8 341 M683.6 551.2 L683.6 360 M709.0 551.2 L709.0 248.7 M729.7 551.2 L729.7 246 M733.6 551.2 L733.6 256 M751.4 551.2 L751.4 255 M768.1 551.2 L768.1 207 M811.8 551.2 L811.8 383" fill="none" stroke="#bd868a" stroke-width="1.25"/><rect x="370.3" y="422.6" width="1" height="1.6" fill="#7e6262"/><rect x="563.8" y="426.6" width="1" height="1.6" fill="#7e6262"/><rect x="580.5" y="374.6" width="1" height="1.6" fill="#7e6262"/><rect x="639.7" y="391.1" width="1" height="1.6" fill="#7e6262"/><rect x="642.7" y="381.6" width="1" height="1.6" fill="#7e6262"/><rect x="647.3" y="333.6" width="1" height="1.6" fill="#7e6262"/><rect x="651.3" y="383.6" width="1" height="1.6" fill="#7e6262"/><rect x="655.3" y="340.6" width="1" height="1.6" fill="#7e6262"/><rect x="683.1" y="359.6" width="1" height="1.6" fill="#7e6262"/><rect x="708.5" y="248.29999999999998" width="1" height="1.6" fill="#7e6262"/><rect x="729.2" y="245.6" width="1" height="1.6" fill="#7e6262"/><rect x="733.1" y="255.6" width="1" height="1.6" fill="#7e6262"/><rect x="750.9" y="254.6" width="1" height="1.6" fill="#7e6262"/><rect x="767.6" y="206.6" width="1" height="1.6" fill="#7e6262"/><rect x="811.3" y="382.6" width="1" height="1.6" fill="#7e6262"/><g stroke="#3c3c3c" stroke-width="0.7" fill="none" stroke-linecap="round"><path d="M367.7 180.2 L368.9 201.7"/><path d="M360.4 205.7 L365.9 206.9"/><path d="M372.0 205.3 L381.8 207.8"/><path d="M365.9 206.9 L354.2 213.5"/><path d="M338.3 209.0 L348.7 215.1"/><path d="M370.2 215.5 L385.5 219.2"/><path d="M364.7 218.2 L356.1 229.8"/><path d="M350.6 221.9 L350.6 231.7"/><path d="M391.6 215.1 L395.3 209.6"/><path d="M392.2 223.1 L402.0 234.7"/><path d="M354.2 241.2 L365.9 248.2"/><path d="M347.5 241.5 L333.4 251.3"/><path d="M321.8 248.2 L327.9 251.9"/><path d="M362.8 208.4 L365.9 210.2"/><path d="M405.5 237.6 L423.8 237.0"/><path d="M428.7 234.9 L439.8 233.1"/><path d="M429.3 236.4 L439.8 234.7"/><path d="M445.9 233.8 L456.3 232.2"/><path d="M445.9 235.4 L456.3 233.8"/><path d="M460.6 227.8 L463.0 223.5"/><path d="M462.4 237.0 L471.6 252.3"/><path d="M397.5 246.2 L393.8 254.7"/><path d="M333.4 258.2 L338.7 271.1"/><path d="M367.7 254.5 L365.6 270.4"/><path d="M342.6 274.5 L362.2 273.5"/><path d="M337.1 280.9 L334.7 286.4"/><path d="M367.7 275.3 L372.0 280.2"/><path d="M366.5 276.9 L370.8 281.8"/><path d="M372.6 289.4 L371.4 312.1"/><path d="M376.3 283.3 L393.4 278.4"/><path d="M362.8 280.2 L369.5 283.5"/><path d="M393.4 263.3 L395.6 273.1"/><path d="M399.2 275.5 L402.6 273.7"/><path d="M399.5 281.1 L406.7 290.2"/><path d="M412.4 291.8 L421.6 287.2"/><path d="M406.5 295.1 L403.2 296.7"/><path d="M410.6 298.2 L412.7 304.3"/></g><g font-family="Liberation Sans, sans-serif" font-size="5.3" fill="#222" text-anchor="middle"><text x="367.3" y="178.2">Cl</text><text x="368.6" y="206.9">C</text><text x="357.9" y="205.8">H</text><text x="384.5" y="211.0">H</text><text x="367.1" y="217.1">C</text><text x="352.2" y="218.9">OH</text><text x="334.9" y="210.4">H</text><text x="388.5" y="222.0">C</text><text x="398.4" y="206.5">H</text><text x="387.0" y="226.5">HC</text><text x="350.5" y="241.0">C</text><text x="368.9" y="252.4">O</text><text x="318.4" y="248.4">H</text><text x="331.0" y="256.0">C</text><text x="323.5" y="259.0">H</text><text x="339.2" y="277.4">HC</text><text x="364.9" y="275.6">C</text><text x="361.8" y="283.5">H</text><text x="373.2" y="286.5">C</text><text x="374.5" y="282.2">H</text><text x="333.2" y="292.0">H</text><text x="370.5" y="318.2">Br</text><text x="392.6" y="260.5">O</text><text x="396.2" y="279.5">C</text><text x="405.4" y="274.5">H</text><text x="409.1" y="296.4">C</text><text x="424.4" y="288.0">H</text><text x="399.9" y="300.5">H</text><text x="413.6" y="310.3">H</text><text x="402.0" y="239.6">H</text><text x="426.0" y="239.0">C</text><text x="428.5" y="240.8">H</text><text x="442.6" y="237.2">C</text><text x="458.7" y="234.2">C</text><text x="465.5" y="218.8">H</text><text x="473.8" y="258.4">Br</text><text x="353.4" y="236">HO</text></g><g font-family="Liberation Sans, sans-serif" font-size="3.3" text-anchor="middle"><text x="367.3" y="181.5" fill="#505050">2</text><text x="357.5" y="209.0" fill="#505050">27</text><text x="368.0" y="210.3" fill="#505050">1</text><text x="385.0" y="214.3" fill="#b66">28</text><text x="367.5" y="220.7" fill="#505050">10</text><text x="335.0" y="213.7" fill="#d55">30</text><text x="352.5" y="222.3" fill="#b66">164</text><text x="399.0" y="210.0" fill="#505050">25</text><text x="386.5" y="229.5" fill="#505050">26</text><text x="351.0" y="244.5" fill="#505050">13</text><text x="369.0" y="255.8" fill="#505050">21</text><text x="318.5" y="251.8" fill="#505050">31</text><text x="332.0" y="259.2" fill="#505050">14</text><text x="323.8" y="262.3" fill="#505050">32</text><text x="338.5" y="281.0" fill="#505050">151</text><text x="333.5" y="295.3" fill="#d55">34</text><text x="361.8" y="287.0" fill="#505050">36</text><text x="373.5" y="290.0" fill="#505050">17</text><text x="370.5" y="321.5" fill="#505050">20</text><text x="397.0" y="283.0" fill="#505050">18</text><text x="406.0" y="278.0" fill="#505050">37</text><text x="410.0" y="299.8" fill="#505050">19</text><text x="425.0" y="291.5" fill="#505050">40</text><text x="400.0" y="304.0" fill="#505050">38</text><text x="414.0" y="313.8" fill="#505050">39</text><text x="428.5" y="244.5" fill="#505050">23</text><text x="442.6" y="240.8" fill="#505050">6</text><text x="459.0" y="237.8" fill="#505050">5</text><text x="466.0" y="222.3" fill="#505050">22</text><text x="474.5" y="261.5" fill="#505050">4</text><text x="402.0" y="244.0" fill="#d55">9</text></g></svg>
<div id="hscroll"></div>
<div style="left:266px;top:674px;width:31px;height:16px;background:linear-gradient(#e4e4e4,#fafafa 50%,#f0f0f0);"></div>
<div style="left:281.5px;top:675px;width:1px;height:15px;background:#cfcfcf"></div>
<div style="left:296.5px;top:674.5px;width:576px;height:15.5px;border-radius:8px;background:linear-gradient(#c4c4c4,#e6e6e6 25%,#ffffff 55%,#f6f6f6);box-shadow:inset 2px 1px 3px rgba(0,0,0,.3),inset -2px 0 3px rgba(0,0,0,.18)"></div>
<div style="left:873px;top:674px;width:31px;height:16px;background:linear-gradient(#e4e4e4,#fafafa 50%,#f0f0f0);"></div>
<div style="left:887.5px;top:675px;width:1px;height:15px;background:#cfcfcf"></div>
<div style="left:516px;top:675.5px;width:136.5px;height:13.5px;border-radius:7px;box-sizing:border-box;border:1px solid #2a58b8;background:linear-gradient(#2f6fd8,#5a9cf0 28%,#94caff 55%,#4a8ae8 85%,#2c66cc);"></div>
<div id="vscroll"><div style="position:absolute;left:0;top:31px;width:18px;height:534px;border-radius:9px;background:linear-gradient(to right,#b4b4b4,#dcdcdc 30%,#f4f4f4 55%);box-shadow:inset 1px 2px 3px rgba(0,0,0,.25)"></div></div>
<div style="left:905px;top:75px;width:8px;height:31px;background:linear-gradient(to right,#d8d8d8,#f8f8f8);"></div>
<div style="left:905px;top:89px;width:8px;height:1px;background:#bdbdbd"></div>
<div style="left:905px;top:640px;width:8px;height:34px;background:linear-gradient(to right,#d8d8d8,#f8f8f8);"></div>
<div style="left:905px;top:657px;width:8px;height:1px;background:#bdbdbd"></div>
<div style="left:906px;top:314.5px;width:7px;height:118px;border-radius:5px 0 0 5px;box-sizing:border-box;border:1px solid #2a58b8;border-right:none;background:linear-gradient(to right,#3f7fe2,#6eaaf6);"></div>
<div style="left:904.5px;top:674.5px;width:8.5px;height:14.5px;background:#fff;border:1px solid #555;border-right:none;box-sizing:border-box;"></div>
<svg style="left:260px;top:70px" width="653" height="625" viewBox="260 70 653 625">
<path d="M276 682.5 L270.5 679.3 L270.5 685.7 Z" fill="#222" transform="rotate(180 273.2 682.5)"/>
<path d="M293 682.5 L287.5 679.3 L287.5 685.7 Z" fill="#222"/>
<path d="M882.4 682.5 L876.8 679.3 L876.8 685.7 Z" fill="#222" transform="rotate(180 879.6 682.5)"/>
<path d="M898.8 682.5 L893.2 679.3 L893.2 685.7 Z" fill="#222"/>
<path d="M906.8 676.6 L916.8 676.6 L911.8 682.8 Z" fill="#000"/>
<path d="M908.8 85.5 L918.8 85.5 L913.8 79.5 Z" fill="#111"/>
<path d="M908.8 96 L918.8 96 L913.8 101.5 Z" fill="#111"/>
<path d="M908.8 651.5 L918.8 651.5 L913.8 645.5 Z" fill="#111"/>
<path d="M908.8 663 L918.8 663 L913.8 668.5 Z" fill="#111"/>
</svg>
<div id="bottombar" class="stripes"></div>
<div style="left:36px;top:690px;width:207px;height:1px;background:#8c8c8c"></div>
<div class="grip" style="left:0px;top:696px;height:28px;"></div>
<div style="left:11px;top:695px;width:37px;height:25px;background:#d6d6d6;border:1px solid #bcbcbc;box-sizing:border-box;"></div>
<div class="vsep" style="left:55px;top:692px;height:32px;border-left-color:#777"></div>
<div class="combo" style="left:63px;top:692.5px;width:130px;height:31px;background:linear-gradient(#ececec,#f6f6f6 50%,#fff);border-color:#7c7c7c;"></div>
<div style="left:80px;top:699px;width:16px;height:14.5px;background:#fff"></div>
<div style="left:82.5px;top:700.5px;width:11px;height:10.5px;background:#c0c0c0"></div>
<div style="left:98.5px;top:697.5px;font-size:14.4px;line-height:18px;white-space:nowrap;letter-spacing:0.05px">light gray</div>
<div style="left:301.5px;top:691px;width:1px;height:34px;background:#b0b0b0"></div>
<div class="grip" style="left:306px;top:696px;height:28px;"></div>
<div style="left:318px;top:695px;width:37.5px;height:25px;background:#d8d8d8;border:1px solid #b4b4b4;box-sizing:border-box;"></div>
<div class="vsep" style="left:446px;top:692px;height:32px;border-left-color:#777"></div>
<div class="combo" style="left:454.5px;top:692.5px;width:103.5px;height:31px;background:linear-gradient(#ececec,#f4f4f4 50%,#fbfbfb);border-color:#7c7c7c;"></div>
<div style="left:471.5px;top:699px;width:14px;height:14px;background:#fff"></div>
<div style="left:473.5px;top:697px;font-size:14.5px;line-height:18px;font-weight:bold;font-style:italic;">A</div>
<div style="left:489.5px;top:697.5px;font-size:14.2px;line-height:18px;white-space:nowrap;letter-spacing:-0.1px">black</div>
<div style="left:565px;top:697.5px;width:282.5px;height:20px;border:1px solid #7e7e7e;border-radius:5px;box-sizing:border-box;background:linear-gradient(#fdfdfd,#f0f0f0 45%,#e6e6e6 55%,#fafafa);box-shadow:0 1px 1px rgba(0,0,0,.25);"></div>
<div style="left:572.5px;top:698.5px;font-size:14.2px;line-height:18px;">Arial</div>
<div style="left:827.5px;top:697.5px;width:20px;height:20px;border:1px solid #2e4f9c;border-radius:0 5px 5px 0;box-sizing:border-box;background:linear-gradient(#86b0ec 0,#4a86e4 42%,#62a8f2 58%,#b6e6ff 100%);"></div>
<div style="left:858px;top:696.5px;width:48px;height:21px;border:1px solid #9a9a9a;box-sizing:border-box;background:#fff;border-top-color:#6a6a6a;border-radius:0 6px 6px 0"></div>
<div style="left:862.5px;top:699px;font-size:14px;line-height:18px;">20</div>
<div style="left:889px;top:696.5px;width:17px;height:21px;border:1px solid #2e4f9c;border-radius:0 5px 5px 0;box-sizing:border-box;background:linear-gradient(#86b0ec 0,#4a86e4 42%,#62a8f2 58%,#b6e6ff 100%);"></div>
<svg style="left:0;top:690px" width="913" height="45" viewBox="0 690 913 45">
<path d="M25.5 701 L25.5 713 L28.3 710.5 L30.3 715.2 L32 714.4 L30 709.8 L33.8 709.5 Z" fill="#fff" stroke="#222" stroke-width="0.9" stroke-linejoin="round"/>
<path d="M38.3 706.6 L47.9 706.6 L43.1 715.4 Z" fill="#000"/>
<path d="M180.1 703.3 L188.9 703.3 L184.5 710.3 Z" fill="#000"/>
<path d="M268.5 704.3 L273 708.5 L268.5 712.7 M274.5 704.3 L279 708.5 L274.5 712.7" fill="none" stroke="#bdbdbd" stroke-width="1.7"/>
<path d="M329.5 701.7 H344.5 M329.5 705 H344.5 M329.5 708.3 H344.5 M329.5 711.6 H344.5" stroke="#000" stroke-width="1.5"/>
<path d="M344.8 706.6 L354.6 706.6 L349.7 715.4 Z" fill="#000"/>
<text x="371.5" y="713.7" font-family="Liberation Serif, serif" font-weight="bold" font-size="18.5" fill="#000" textLength="15.5" lengthAdjust="spacingAndGlyphs">B</text>
<path d="M386.8 706.6 L396.8 706.6 L391.8 715.4 Z" fill="#000"/>
<text x="414.3" y="713" font-family="Liberation Sans, sans-serif" font-size="14.5" fill="#000" stroke="#000" stroke-width="0.3">X</text>
<text x="424.6" y="715" font-family="Liberation Sans, sans-serif" font-weight="bold" font-size="6.5" fill="#d02020">2</text>
<path d="M429 706.6 L439 706.6 L434 715.4 Z" fill="#000"/>
<path d="M545.2 703.3 L553.8 703.3 L549.5 710.3 Z" fill="#000"/>
<path d="M834.6 704.6 L840.6 704.6 L837.6 700.8 Z M834.6 709.6 L840.6 709.6 L837.6 713.4 Z" fill="#0a0a1a"/>
<path d="M893.4 704.4 L900.6 704.4 L897 709.2 Z" fill="#0a0a1a"/>
</svg>

</body>
</html>
